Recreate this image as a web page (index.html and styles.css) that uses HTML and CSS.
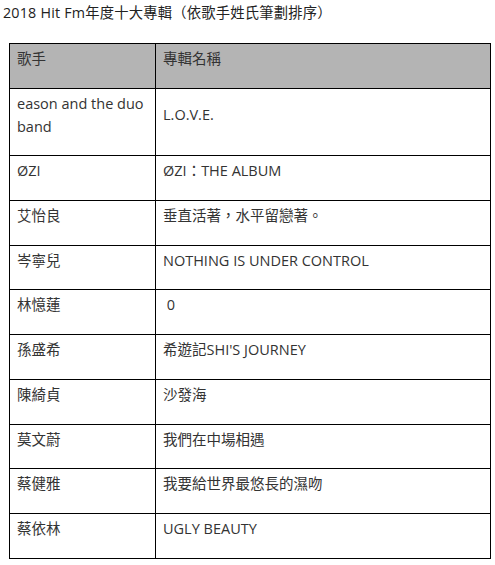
FILE: index.html
```html
<!DOCTYPE html>
<html lang="zh-Hant">
<head>
<meta charset="utf-8">
<title>2018 Hit Fm年度十大專輯</title>
<link rel="stylesheet" href="styles.css">
</head>
<body>
<p class="title">2018 Hit Fm年度十大專輯（依歌手姓氏筆劃排序）</p>
<table class="albums">
  <colgroup>
    <col class="col-artist">
    <col class="col-album">
  </colgroup>
  <thead>
    <tr><th>歌手</th><th>專輯名稱</th></tr>
  </thead>
  <tbody>
    <tr><td>eason and the duo band</td><td>L.O.V.E.</td></tr>
    <tr><td>ØZI</td><td>ØZI：THE ALBUM</td></tr>
    <tr><td>艾怡良</td><td>垂直活著，水平留戀著。</td></tr>
    <tr><td>岑寧兒</td><td>NOTHING IS UNDER CONTROL</td></tr>
    <tr><td>林憶蓮</td><td>&nbsp;0</td></tr>
    <tr><td>孫盛希</td><td>希遊記SHI'S JOURNEY</td></tr>
    <tr><td>陳綺貞</td><td>沙發海</td></tr>
    <tr><td>莫文蔚</td><td>我們在中場相遇</td></tr>
    <tr><td>蔡健雅</td><td>我要給世界最悠長的濕吻</td></tr>
    <tr><td>蔡依林</td><td>UGLY BEAUTY</td></tr>
  </tbody>
</table>
</body>
</html>
```
FILE: styles.css
```css
html, body {
  margin: 0;
  padding: 0;
  background: #ffffff;
}
body {
  padding: 1px 0 0 3px;
  font-family: "Open Sans", "Noto Sans CJK TC", sans-serif;
  font-size: 14px;
  line-height: 23px;
  color: #333333;
}
.title {
  margin: 0 0 19px 0;
  font-size: 14.3px;
  letter-spacing: 0.2px;
  color: #222222;
}
.albums {
  margin-left: 6px;
  width: 481px;
  table-layout: fixed;
  border-collapse: collapse;
  border: 1px solid #000000;
  font-size: 14.5px;
}
.col-artist { width: 146px; }
.col-album { width: 335px; }
.albums th,
.albums td {
  border: 1px solid #000000;
  padding: 3px 7px 17.7px 7px;
  text-align: left;
  vertical-align: middle;
  font-weight: normal;
}
.albums th {
  background: #b4b4b4;
  vertical-align: top;
}
```
